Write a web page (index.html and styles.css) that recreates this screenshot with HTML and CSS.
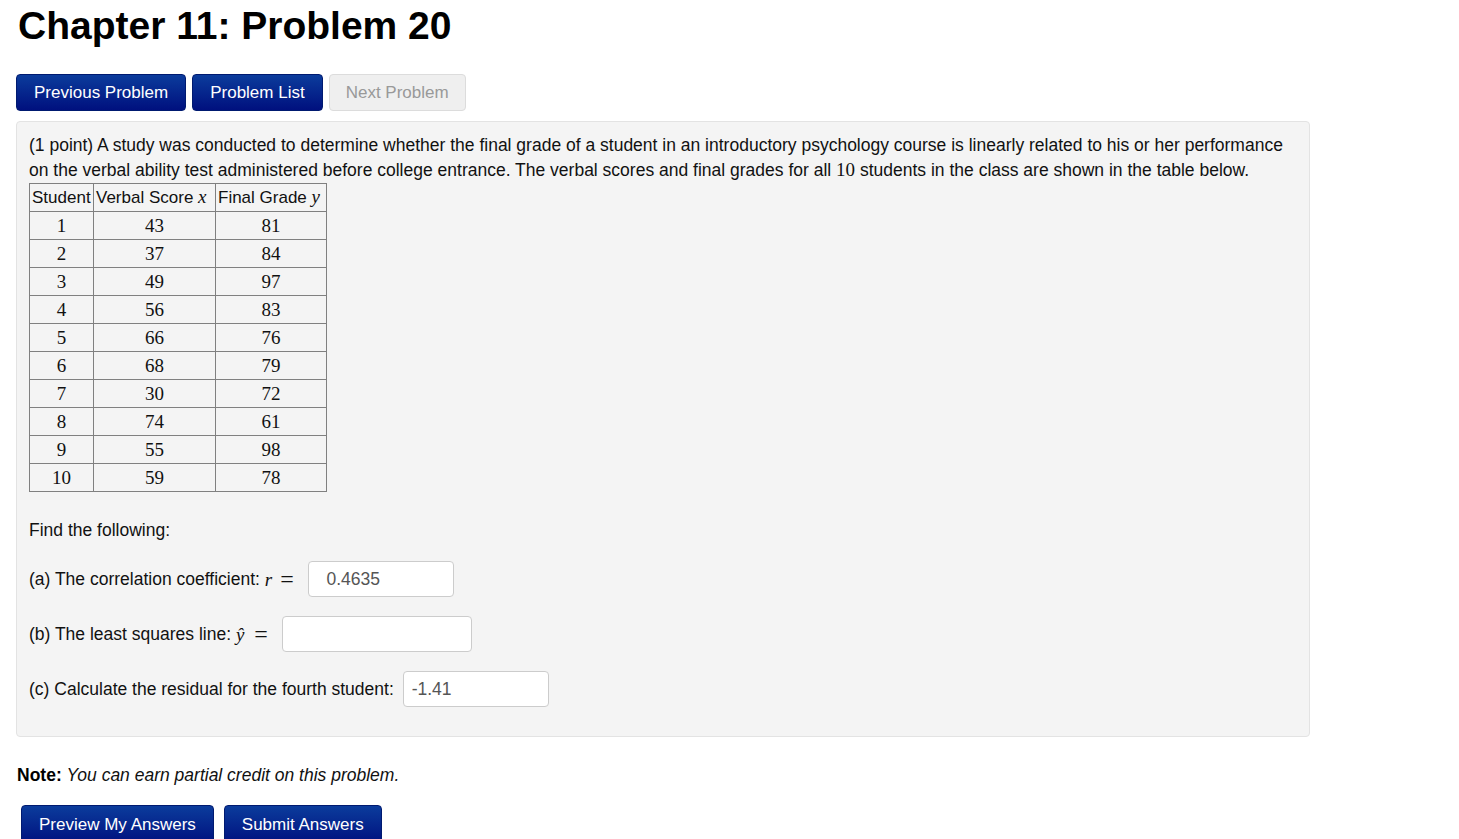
FILE: index.html
```html
<!DOCTYPE html>
<html>
<head>
<meta charset="utf-8">
<link rel="stylesheet" href="styles.css">
</head>
<body>
<div class="page">
  <h1 class="title">Chapter 11: Problem 20</h1>
  <div class="nav">
    <a class="btn btn-primary">Previous Problem</a>
    <a class="btn btn-primary">Problem List</a>
    <a class="btn btn-disabled">Next Problem</a>
  </div>
  <div class="problem">
    <div class="intro">(1 point) A study was conducted to determine whether the final grade of a student in an introductory psychology course is linearly related to his or her performance on the verbal ability test administered before college entrance. The verbal scores and final grades for all <span class="m">10</span> students in the class are shown in the table below.</div>
    <table class="data">
      <colgroup><col class="c1"><col class="c2"><col class="c3"></colgroup>
      <tr class="head"><td>Student</td><td>Verbal Score <span class="mi">x</span></td><td>Final Grade <span class="mi">y</span></td></tr>
      <tr><td>1</td><td>43</td><td>81</td></tr>
      <tr><td>2</td><td>37</td><td>84</td></tr>
      <tr><td>3</td><td>49</td><td>97</td></tr>
      <tr><td>4</td><td>56</td><td>83</td></tr>
      <tr><td>5</td><td>66</td><td>76</td></tr>
      <tr><td>6</td><td>68</td><td>79</td></tr>
      <tr><td>7</td><td>30</td><td>72</td></tr>
      <tr><td>8</td><td>74</td><td>61</td></tr>
      <tr><td>9</td><td>55</td><td>98</td></tr>
      <tr><td>10</td><td>59</td><td>78</td></tr>
    </table>
    <p class="find">Find the following:</p>
    <div class="q qa">(a) The correlation coefficient: <span class="mi">r</span><span class="m eq">=</span><input class="ans w145" type="text" value="  0.4635"></div>
    <div class="q qb">(b) The least squares line: <span class="mi">y&#770;</span><span class="m eq">=</span><input class="ans w189" type="text" value=""></div>
    <div class="q qc">(c) Calculate the residual for the fourth student: <input class="ans w145" type="text" value="-1.41"></div>
  </div>
  <p class="note"><b>Note:</b> <i>You can earn partial credit on this problem.</i></p>
  <div class="submit">
    <a class="btn btn-primary big">Preview My Answers</a>
    <a class="btn btn-primary big">Submit Answers</a>
  </div>
</div>
</body>
</html>
```
FILE: styles.css
```css
html, body {
  margin: 0;
  padding: 0;
  background: #fff;
}
body {
  font-family: "Liberation Sans", Arial, sans-serif;
  font-size: 17.5px;
  color: #111;
  overflow: hidden;
}
.page {
  padding-left: 16px;
}
.title {
  margin: 0;
  padding: 3px 0 0 2px;
  font-size: 39px;
  line-height: 46px;
  font-weight: bold;
  color: #000;
}
.nav {
  display: flex;
  gap: 6px;
  margin-top: 25px;
}
.btn {
  display: inline-flex;
  align-items: center;
  box-sizing: border-box;
  height: 37px;
  padding: 0 17px;
  font-size: 17px;
  border-radius: 4px;
  text-decoration: none;
}
.btn-primary {
  color: #fff;
  background: linear-gradient(to bottom, #0b3c9c, #00107e);
  border: 1px solid #001a70;
}
.btn-disabled {
  color: #999;
  background: #efefef;
  border: 1px solid #dcdcdc;
  padding: 0 16px;
}
.problem {
  box-sizing: border-box;
  width: 1294px;
  margin-top: 10px;
  padding: 11px 12px 29px 12px;
  background: #f4f4f4;
  border: 1px solid #e3e3e3;
  border-radius: 4px;
}
.intro {
  line-height: 25px;
}
.m {
  font-family: "Liberation Serif", "Times New Roman", serif;
  font-size: 19px;
  line-height: 1;
}
.mi {
  font-family: "Liberation Serif", "Times New Roman", serif;
  font-style: italic;
  font-size: 19px;
  line-height: 1;
}
.data {
  border-collapse: collapse;
  border: 1px solid #333;
  table-layout: fixed;
  width: 298px;
}
.c1 { width: 64px; }
.c2 { width: 122px; }
.c3 { width: 111px; }
.data td {
  border: 1px solid #808080;
  height: 27px;
  padding: 0;
  text-align: center;
  font-family: "Liberation Serif", "Times New Roman", serif;
  font-size: 19px;
  line-height: 20px;
}
.data tr.head td {
  font-family: "Liberation Sans", Arial, sans-serif;
  font-size: 17px;
  text-align: left;
  padding-left: 2px;
}
.find {
  margin: 26px 0 0 0;
  line-height: 25px;
}
.q {
  display: flex;
  align-items: center;
  height: 36px;
  margin-top: 19px;
  line-height: 25px;
  white-space: pre;
}
.find + .q {
  margin-top: 18px;
}
.eq {
  font-size: 24px;
  margin: 0 14px 0 8px;
}
.qb .eq {
  margin: 0 14px 0 10px;
}
.ans {
  box-sizing: border-box;
  height: 36px;
  padding: 0 8px;
  border: 1px solid #ccc;
  border-radius: 4px;
  background: #fff;
  font-family: "Liberation Sans", Arial, sans-serif;
  font-size: 17.5px;
  color: #555;
}
.w145 { width: 146px; }
.w189 { width: 190px; }
.qc .ans {
  margin-left: 4px;
}
.note {
  margin: 26px 0 0 1px;
  line-height: 25px;
}
.note b { color: #000; }
.submit {
  display: flex;
  gap: 10px;
  margin: 17px 0 0 5px;
}
.btn.big {
  height: 40px;
}
```
